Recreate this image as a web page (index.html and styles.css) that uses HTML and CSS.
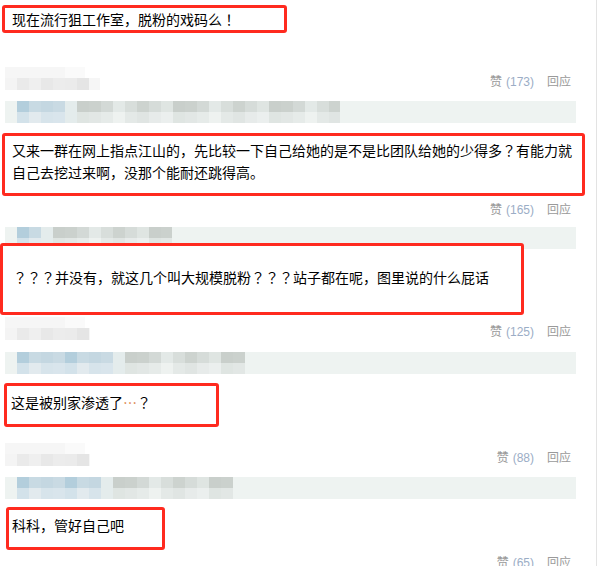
FILE: index.html
```html
<!DOCTYPE html>
<html lang="zh-CN">
<head>
  <meta charset="UTF-8" />
  <meta name="viewport" content="width=device-width, initial-scale=1" />
  <title>评论</title>
  <link rel="stylesheet" href="styles.css">
</head>
<body>
  <div class="page">

    <p class="note note-1">现在流行狙工作室，脱粉的戏码么<span class="fw" lang="zh-TW">！</span></p>
    <div class="info info-1">
      <span class="blur-name"></span>
      <span class="meta"><span class="zan">赞</span><span class="count">(173)</span><span class="reply">回应</span></span>
    </div>
    <div class="quote quote-1"><span class="blur-text blur-a"></span></div>

    <p class="note note-2">又来一群在网上指点江山的，先比较一下自己给她的是不是比团队给她的少得多<span class="fw" lang="zh-TW">？</span>有能力就自己去挖过来啊，没那个能耐还跳得高。</p>
    <div class="info info-2">
      <span></span>
      <span class="meta"><span class="zan">赞</span><span class="count">(165)</span><span class="reply">回应</span></span>
    </div>
    <div class="quote quote-2"><span class="blur-text blur-b"></span></div>

    <p class="note note-3"><span class="fw" lang="zh-TW">？？？</span>并没有，就这几个叫大规模脱粉<span class="fw" lang="zh-TW">？？？</span>站子都在呢，图里说的什么屁话</p>
    <div class="info info-3">
      <span class="blur-name blur-name-short"></span>
      <span class="meta"><span class="zan">赞</span><span class="count">(125)</span><span class="reply">回应</span></span>
    </div>
    <div class="quote quote-3"><span class="blur-text blur-c"></span></div>

    <p class="note note-4">这是被别家渗透了<span class="dots">…</span><span class="fw" lang="zh-TW">？</span></p>
    <div class="info info-4">
      <span class="blur-name blur-name-short"></span>
      <span class="meta"><span class="zan">赞</span><span class="count">(88)</span><span class="reply">回应</span></span>
    </div>
    <div class="quote quote-4"><span class="blur-text blur-d"></span></div>

    <p class="note note-5">科科，管好自己吧</p>
    <div class="info info-5">
      <span></span>
      <span class="meta"><span class="zan">赞</span><span class="count">(65)</span><span class="reply">回应</span></span>
    </div>

  </div>
</body>
</html>
```

FILE: styles.css
```css
* {
  box-sizing: border-box;
}
html, body {
  margin: 0;
  background: #fff;
  overflow: hidden;
}
body {
  font-family: "Noto Sans CJK SC", "Liberation Sans", sans-serif;
  color: #000;
}
.page {
  width: 597px;
  height: 566px;
  overflow: hidden;
  border-right: 1px solid #e3e3e3;
  padding-top: 5px;
}

/* Cajas rojas */
.note {
  margin: 0;
  border: 3px solid #ff2a1f;
  border-radius: 3px;
  background: #fff;
  font-size: 14px;
  line-height: 22px;
}
.note-1 {
  margin-left: 2px;
  width: 285px;
  padding: 0 7px;
}
.note-2 {
  margin: 10px 0 0 2px;
  width: 583px;
  padding: 3px 5px 10px 7px;
}
.note-3 {
  position: relative; /* tapa la barra de cita de arriba */
  margin: -6px 0 0 0;
  width: 524px;
  padding: 20px 10px 24px 10px;
}
.note-4 {
  margin: 9px 0 0 4px;
  width: 215px;
  padding: 5px 4px 11px 4px;
}
.note-5 {
  margin: 8px 0 0 6px;
  width: 159px;
  padding: 4px 3px 11px 3px;
}
/* signos de ancho completo centrados */
.fw {
  font-family: "Noto Sans CJK TC", "Noto Sans CJK SC", sans-serif;
}
.dots {
  color: #d9793a;
}

/* Fila con nombre y votos */
.info {
  display: flex;
  justify-content: space-between;
  align-items: flex-end;
  height: 24px;
  margin: 0 20px 0 5px;
}
.info-1 { margin-top: 33px; }
.info-2 { margin-top: 2px; height: 20px; }
.info-3 { margin-top: 1px; }
.info-4 { margin-top: 15px; }
.info-5 { margin-top: 1px; height: 20px; }

.meta {
  font-size: 12px;
  line-height: 16px;
  color: #9a9a9a;
  margin-right: 5px;
  white-space: nowrap;
}
.count {
  font-family: "Liberation Sans", Arial, sans-serif;
  color: #9badc6;
  margin-left: 4px;
}
.reply {
  margin-left: 13px;
}

.blur-name {
  display: block;
  width: 95px;
  height: 23px;
  background:
    linear-gradient(90deg, #f4f4f4 0 12px, #eaeaea 12px 24px, #efefef 24px 36px, #e8e8e8 36px 48px, #ececec 48px 60px, #ebebeb 60px 72px, #e5e5e5 72px 84px, #f6f6f6 84px 95px) 0 11px / 100% 12px no-repeat,
    linear-gradient(90deg, #f6f6f6 0 60px, #fafafa 60px 80px, #fff 80px) 0 0 / 100% 11px no-repeat;
}
.blur-name-short {
  width: 85px;
}

/* Barras de cita */
.quote {
  height: 22px;
  margin: 0 20px 0 5px;
  padding-left: 12px;
  background: #eef3f1;
}
.quote-1 { margin-top: 11px; }
.quote-2 { margin-top: 9px; }
.quote-3 { margin-top: 12px; }
.quote-4 { margin-top: 11px; }

.blur-text {
  display: block;
  height: 22px;
  width: var(--w);
  background:
    repeating-linear-gradient(90deg, #b3cedc 0 12px, #c8dae3 12px 24px, #c4d7e1 24px 36px, #c9dae3 36px 48px) 0 0 / var(--blue) 11px no-repeat,
    repeating-linear-gradient(90deg, #d3e2ea 0 12px, #e2eaee 12px 24px, #d7e4eb 24px 36px, #d9e5ec 36px 48px) 0 11px / var(--blue) 11px no-repeat,
    repeating-linear-gradient(90deg, #c9cfcb 0 12px, #cbd1cd 12px 24px, #d3d9d6 24px 36px, #e3e9e7 36px 48px, #d8dedb 48px 60px, #cdd3cf 60px 72px, #d6dcd9 72px 84px, #dfe5e2 84px 96px) calc(var(--blue) + 12px) 0 / calc(var(--w) - var(--blue) - 12px) 11px no-repeat,
    repeating-linear-gradient(90deg, #dfe5e2 0 12px, #e2e7e5 12px 24px, #e6ebe9 24px 36px, #eef2f0 36px 48px, #e4e9e7 48px 60px, #e0e5e3 60px 72px, #e7ebea 72px 84px, #ebefee 84px 96px) calc(var(--blue) + 12px) 11px / calc(var(--w) - var(--blue) - 12px) 11px no-repeat,
    #e4ecec;
}
.blur-a { --w: 323px; --blue: 48px; }
.blur-b { --w: 155px; --blue: 24px; }
.blur-c { --w: 228px; --blue: 96px; }
.blur-d { --w: 216px; --blue: 84px; }
```
